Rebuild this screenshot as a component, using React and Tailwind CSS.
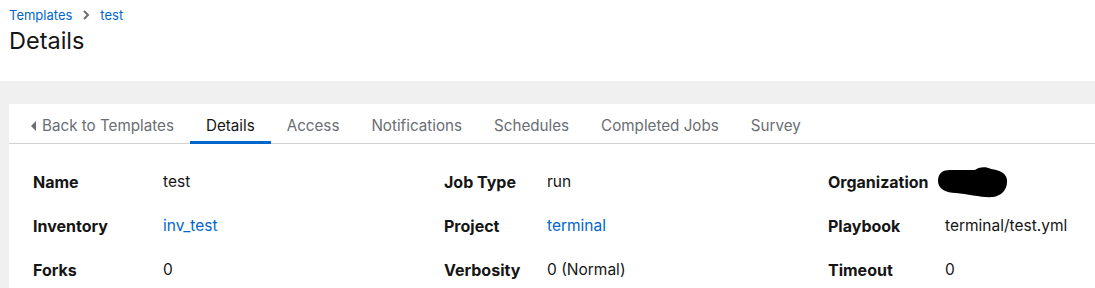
import React from 'react';

const tabs = ['Details', 'Access', 'Notifications', 'Schedules', 'Completed Jobs', 'Survey'];

// label / value columns, widths taken from the screenshot
const columns = [
  {
    labelWidth: 'w-[130px]',
    width: 'w-[411px]',
    rows: [
      { label: 'Name', value: 'test' },
      { label: 'Inventory', value: 'inv_test', link: true },
      { label: 'Forks', value: '0' },
    ],
  },
  {
    labelWidth: 'w-[103px]',
    width: 'w-[384px]',
    rows: [
      { label: 'Job Type', value: 'run' },
      { label: 'Project', value: 'terminal', link: true },
      { label: 'Verbosity', value: '0 (Normal)' },
    ],
  },
  {
    labelWidth: 'w-[117px]',
    width: 'flex-1',
    rows: [
      { label: 'Organization', hidden: true },
      { label: 'Playbook', value: 'terminal/test.yml' },
      { label: 'Timeout', value: '0' },
    ],
  },
];

// scribbled-out organization name
function Redacted() {
  return (
    <svg width="70" height="31" viewBox="0 0 70 31" className="block -ml-[7px] -mt-[3px] -mb-[4px]">
      <path
        d="M0 14 C0 6 5 3 12 3 L37 3 C40 0 48 -1 53 2 C62 3 70 7 69 15 C69 23 63 29 55 30 C45 31 30 27 18 26 C8 26 0 22 0 14 Z"
        fill="#000"
      />
    </svg>
  );
}

export default function App() {
  return (
    <div className="min-h-screen bg-[#f0f0f0] text-[#151515]" style={{ fontFamily: 'Inter, "Noto Sans", sans-serif' }}>
      {/* Page header */}
      <div className="bg-white h-[81px] px-[9px] pt-[5px]">
        <nav className="flex items-center gap-[10px] text-[13px] leading-[20px]">
          <span className="text-[#0066cc]">Templates</span>
          <svg width="8" height="10" viewBox="0 0 8 10">
            <path d="M2 1 L6 5 L2 9" stroke="#6a6e73" strokeWidth="2" fill="none" />
          </svg>
          <span className="text-[#0066cc]">test</span>
        </nav>
        <h1 className="text-[23.5px] leading-[32px]">Details</h1>
      </div>

      {/* Body */}
      <div className="pt-[23px] pl-[9px]">
        <div className="bg-white min-h-[184px]">
          {/* Tabs */}
          <div className="flex border-b border-[#d2d2d2] pl-[6px] h-[40px] text-[15.2px]">
            <div className="flex items-center px-[16px] pt-[5px] text-[#6a6e73] gap-[5px]">
              <svg width="6" height="10" viewBox="0 0 6 10">
                <path d="M5 0 L0 5 L5 10 Z" fill="#6a6e73" />
              </svg>
              <span>Back to Templates</span>
            </div>
            {tabs.map((t) => (
              <div
                key={t}
                className={
                  t === 'Details'
                    ? 'flex items-center px-[16px] text-[#151515] border-b-[3px] border-[#0066cc] pt-[8px] -mb-px'
                    : 'flex items-center px-[16px] pt-[5px] text-[#6a6e73]'
                }
              >
                {t}
              </div>
            ))}
          </div>

          {/* Detail list */}
          <div className="flex pl-[24px] pt-[26px]">
            {columns.map((col, i) => (
              <div key={i} className={`${col.width} flex flex-col gap-[20px]`}>
                {col.rows.map((r) => (
                  <div key={r.label} className="flex text-[16px] leading-[24px]">
                    <div className={`${col.labelWidth} font-bold`}>{r.label}</div>
                    <div className={r.link ? 'text-[#0066cc] text-[15.5px]' : 'text-[15.5px]'}>
                      {r.hidden ? <Redacted /> : r.value}
                    </div>
                  </div>
                ))}
              </div>
            ))}
          </div>
        </div>
      </div>
    </div>
  );
}
